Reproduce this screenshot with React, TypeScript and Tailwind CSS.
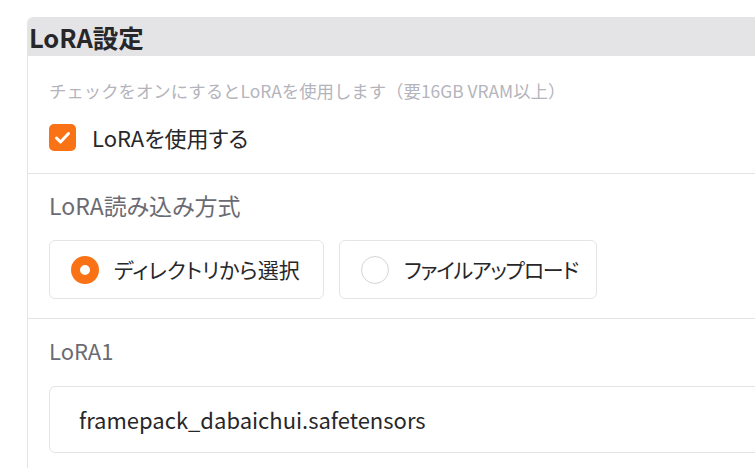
import React from "react";

const font = {
  fontFamily: '"Noto Sans CJK JP", "Noto Sans", sans-serif',
};

export default function App() {
  return (
    <div
      className="w-[755px] h-[468px] overflow-hidden bg-white pt-[17px] pl-[27px]"
      style={font}
    >
      <div className="w-[760px] h-[460px] border-l border-t border-[#e4e4e7] rounded-tl-[6px] overflow-hidden flex flex-col">
        <div className="h-[38px] bg-[#e4e4e7] flex items-center pl-[1px] text-[25.5px] font-bold text-[#27272a] leading-none">
          LoRA設定
        </div>
        <div className="flex flex-col pl-[21px] pt-[23px] pb-[22px] border-b border-[#e4e4e7]">
          <div className="text-[17.4px] leading-[24px] text-[#b4b4bc] whitespace-nowrap">
            チェックをオンにするとLoRAを使用します（要16GB VRAM以上）
          </div>
          <div className="mt-[21px] flex items-center h-[27px] gap-[16px]">
            <div className="w-[27px] h-[27px] rounded-[5px] bg-[#f97316] flex items-center justify-center">
              <svg width="27" height="27" viewBox="0 0 27 27">
                <path
                  d="M7.5 14 L11.5 18 L19.5 9.5"
                  fill="none"
                  stroke="white"
                  strokeWidth="3"
                  strokeLinecap="round"
                  strokeLinejoin="round"
                />
              </svg>
            </div>
            <span className="text-[22px] leading-[27px] text-[#27272a] [font-feature-settings:'palt']">
              LoRAを使用する
            </span>
          </div>
        </div>
        <div className="flex flex-col pl-[21px] pt-[16px] pb-[19px] border-b border-[#e4e4e7]">
          <div className="text-[23px] leading-[30px] text-[#6b6b73] [font-feature-settings:'palt']">
            LoRA読み込み方式
          </div>
          <div className="mt-[20px] flex gap-[15px]">
            <div className="w-[275px] h-[59px] border border-[#e4e4e7] rounded-[6px] flex items-center pl-[21px] gap-[15px]">
              <div className="w-[28px] h-[28px] rounded-full border-[9px] border-[#f97316] bg-white" />
              <span className="text-[21px] whitespace-nowrap text-[#27272a] [font-feature-settings:'palt']">
                ディレクトリから選択
              </span>
            </div>
            <div className="w-[258px] h-[59px] border border-[#e4e4e7] rounded-[6px] flex items-center pl-[21px] gap-[15px]">
              <div className="w-[28px] h-[28px] rounded-full border-[1.5px] border-[#d4d4d8] bg-white" />
              <span className="text-[21px] tracking-[-1.2px] whitespace-nowrap text-[#27272a] [font-feature-settings:'palt']">
                ファイルアップロード
              </span>
            </div>
          </div>
        </div>
        <div className="flex flex-col pl-[21px] pt-[16px]">
          <div className="text-[22px] leading-[30px] text-[#6b6b73]">LoRA1</div>
          <div className="mt-[21px] h-[67px] border border-[#e4e4e7] rounded-[6px] flex items-center pl-[29px]">
            <span className="text-[22px] text-[#27272a] whitespace-nowrap">
              framepack_dabaichui.safetensors
            </span>
          </div>
        </div>
      </div>
    </div>
  );
}
